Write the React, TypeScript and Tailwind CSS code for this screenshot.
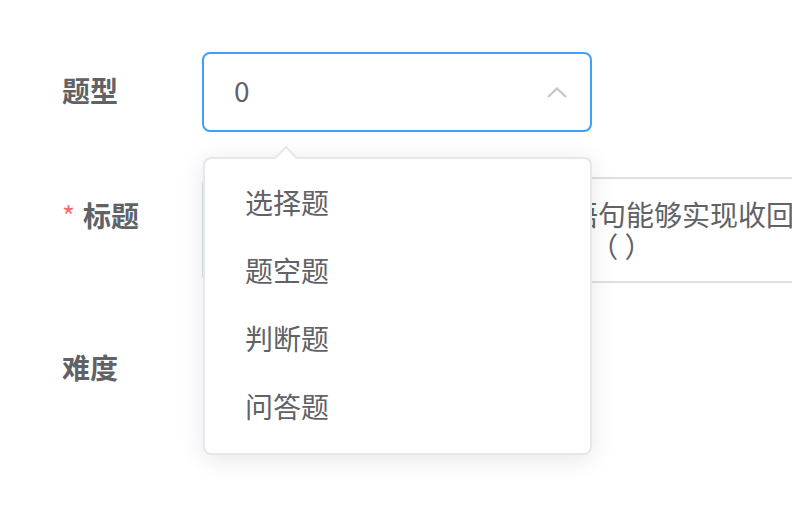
import React from "react";

const font = { fontFamily: '"Noto Sans CJK SC", "Noto Sans", sans-serif' };

export default function App() {
  const items = ["选择题", "题空题", "判断题", "问答题"];
  return (
    <div
      className="relative w-[792px] h-[524px] bg-white overflow-hidden text-[#606266]"
      style={font}
    >
      <div className="flex flex-col pt-[52px] pl-[62px]">
        {/* Row 1 */}
        <div className="flex">
          <div className="shrink-0 w-[140px] h-[80px] pb-[4px] flex items-center text-[28px] font-bold">题型</div>
          <div className="shrink-0 w-[390px] h-[80px] rounded-[8px] border-2 border-[#409eff] flex items-center justify-between pl-[30px] pr-[23px]">
            <span className="text-[28px] leading-none pb-[4px]">0</span>
            <svg width="20" height="11" viewBox="0 0 20 11" fill="none">
              <polyline points="1,10 10,1.5 19,10" stroke="#c0c4cc" strokeWidth="2" fill="none" />
            </svg>
          </div>
        </div>
        {/* Row 2 */}
        <div className="flex mt-[45px]">
          <div className="shrink-0 w-[140px] h-[80px] pb-[4px] flex items-center text-[28px] font-bold">
            <span className="text-[#f56c6c] mr-[8px] font-normal">*</span>
            标题
          </div>
          <div className="shrink-0 w-[700px] h-[106px] rounded-[8px] border-2 border-[#dcdfe6] pt-[19px] pl-[30px] text-[28px] leading-[32px] whitespace-nowrap overflow-hidden">
            <div>下列关于数据库权限的哪条语句能够实现收回权限</div>
            <div>用户王明对学生表的查询权U（ ）</div>
          </div>
        </div>
        {/* Row 3 */}
        <div className="flex mt-[46px]">
          <div className="shrink-0 w-[140px] h-[80px] pb-[4px] flex items-center text-[28px] font-bold">难度</div>
        </div>
      </div>

      {/* Dropdown */}
      <div className="absolute left-[203px] top-[157px] w-[389px] bg-white border-2 border-[#e4e7ed] rounded-[8px] shadow-[0_4px_24px_0_rgba(0,0,0,0.1)] py-[11px]">
        <div className="absolute left-[73px] top-[-10px] w-[16px] h-[16px] rotate-45 bg-white border-t-2 border-l-2 border-[#e4e7ed]" />
        {items.map((t) => (
          <div key={t} className="relative h-[68px] pb-[4px] flex items-center pl-[40px] text-[28px] text-[#606266]">
            {t}
          </div>
        ))}
      </div>
    </div>
  );
}
